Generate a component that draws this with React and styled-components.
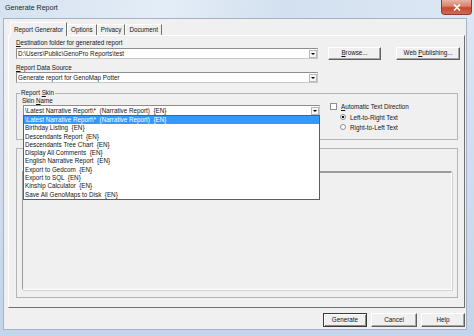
import React from "react";
import styled, { createGlobalStyle } from "styled-components";

const FONT = `"Liberation Sans", Arial, sans-serif`;

const GlobalStyle = createGlobalStyle`
  html, body { margin: 0; padding: 0; width: 474px; height: 336px; overflow: hidden; background: #fff; }
  body { font-family: ${FONT}; }
  * { box-sizing: border-box; }
`;

const Window = styled.div`
  width: 474px;
  height: 336px;
  display: flex;
  flex-direction: column;
  background: linear-gradient(180deg, #dfe8f4 0%, #d2dfef 40%, #c3d5ea 100%);
  font-family: ${FONT};
  color: #141414;
`;

const TitleBar = styled.div`
  height: 18px;
  flex: none;
  display: flex;
  align-items: flex-start;
  justify-content: space-between;
  padding-left: 5px;
  background: linear-gradient(100deg, #d6e2f0 0%, #e4edf7 35%, #d3e0ef 60%, #dde8f5 100%);
`;

const Title = styled.div`
  font-size: 7.1px;
  line-height: 17px;
  color: #1a1f28;
`;

const CloseButton = styled.div`
  width: 31px;
  height: 15px;
  margin-right: 2px;
  border: 1px solid #8a3a30;
  border-top: none;
  border-radius: 0 0 4px 4px;
  background: linear-gradient(180deg, #e9b2a5 0%, #d9806c 45%, #c44a31 55%, #d3694f 100%);
  display: flex;
  align-items: center;
  justify-content: center;
`;

const Client = styled.div`
  flex: 1;
  margin: 0 7px 6px 3px;
  background: #f0f0f0;
  border: 1px solid #a3b2c6;
  display: flex;
  flex-direction: column;
  padding: 3px 1px 2px 4px;
`;

const TabStrip = styled.div`
  height: 13px;
  flex: none;
  display: flex;
  align-items: flex-end;
  padding-left: 2px;
  position: relative;
  z-index: 2;
`;

const Tab = styled.div`
  font-size: 6.3px;
  height: ${(p) => (p.$active ? 14 : 11)}px;
  line-height: ${(p) => (p.$active ? 13 : 10)}px;
  margin-bottom: ${(p) => (p.$active ? -1 : 0)}px;
  padding: 0 ${(p) => (p.$active ? 3 : 3)}px;
  background: #f0f0f0;
  border-top: 1px solid #fff;
  border-left: 1px solid #fff;
  border-right: 1px solid #6f6f6f;
  white-space: nowrap;
`;

const Panel = styled.div`
  flex: 1;
  display: flex;
  flex-direction: column;
  border: 1px solid;
  border-color: #fff #6f6f6f #6f6f6f #fff;
  padding: 3px 4px 9px 7px;
`;

const Label = styled.div`
  font-size: 6.3px;
  line-height: 8px;
  height: 8px;
  margin-top: ${(p) => p.$mt || 0}px;
  white-space: nowrap;
`;

const Row = styled.div`
  display: flex;
  align-items: center;
  height: 13px;
`;

const Combo = styled.div`
  position: relative;
  width: ${(p) => p.$w}px;
  height: 11px;
  margin-left: ${(p) => p.$ml || 0}px;
  background: #fff;
  border: 1px solid #8d8d8d;
  border-right-color: #c8c8c8;
  border-bottom-color: #c8c8c8;
  display: flex;
  align-items: center;
  padding-left: 1px;
  font-size: 6.3px;
  white-space: pre;
`;

const ComboText = styled.span`
  flex: 1;
  line-height: 9px;
  overflow: hidden;
`;

const Arrow = styled.span`
  width: 8px;
  height: 8px;
  margin-right: 0px;
  border: 1px solid #b8b8b8;
  background: #f6f6f6;
  display: flex;
  align-items: center;
  justify-content: center;
  &::after {
    content: "";
    border-left: 2px solid transparent;
    border-right: 2px solid transparent;
    border-top: 2px solid #000;
  }
`;

const Button = styled.button`
  font-family: ${FONT};
  font-size: 6.3px;
  color: #141414;
  width: ${(p) => p.$w}px;
  height: ${(p) => p.$h || 13}px;
  margin-left: ${(p) => p.$ml || 0}px;
  padding: 0;
  background: #f0f0f0;
  border: 1px solid;
  border-color: ${(p) => (p.$default ? "#3a3a3a" : "#fff #5f5f5f #5f5f5f #fff")};
  box-shadow: ${(p) =>
    p.$default ? "inset 1px 1px #fff, inset -1px -1px #8a8a8a" : "inset -1px -1px #a8a8a8"};
  line-height: 1;
  white-space: nowrap;
`;

const Group = styled.fieldset`
  margin: ${(p) => p.$mt}px 2px 0 0;
  padding: ${(p) => p.$pad};
  border: 1px solid #b4b4b4;
  min-width: 0;
  display: flex;
  flex-direction: ${(p) => (p.$row ? "row" : "column")};
  align-items: flex-start;
  flex: ${(p) => (p.$grow ? 1 : "none")};
`;

const Legend = styled.legend`
  font-size: 6.3px;
  line-height: 8px;
  padding: 0 1px;
  margin-left: -2px;
`;

const LeftCol = styled.div`
  width: 298px;
  display: flex;
  flex-direction: column;
`;

const RightCol = styled.div`
  margin-left: 10px;
  padding-top: 5px;
  display: flex;
  flex-direction: column;
`;

const CheckRow = styled.div`
  display: flex;
  align-items: center;
  gap: 4px;
  height: ${(p) => p.$h || 10}px;
  margin-left: ${(p) => p.$ml || 0}px;
  margin-top: ${(p) => p.$mt || 0}px;
  font-size: 6.3px;
  white-space: nowrap;
`;

const CheckBox = styled.span`
  width: 7px;
  height: 7px;
  background: #fff;
  border: 1px solid #8e8e8e;
`;

const Radio = styled.span`
  width: 6px;
  height: 6px;
  border-radius: 50%;
  border: 1px solid #8e8e8e;
  background: ${(p) =>
    p.$checked ? "radial-gradient(circle, #111 0 1.2px, #fff 1.6px)" : "#fff"};
`;

const DropList = styled.div`
  position: absolute;
  top: 100%;
  left: -1px;
  right: -1px;
  background: #fff;
  border: 1px solid #5e5e5e;
  z-index: 5;
`;

const DropItem = styled.div`
  height: 8.3px;
  line-height: 8.3px;
  padding-left: 1px;
  font-size: 6.3px;
  white-space: pre;
  background: ${(p) => (p.$selected ? "#3399ff" : "transparent")};
  color: ${(p) => (p.$selected ? "#fff" : "#141414")};
`;

const Sunken = styled.div`
  flex: 1;
  align-self: stretch;
  border-top: 2px solid #9c9c9c;
  border-left: 1px solid #9c9c9c;
  border-right: 1px solid #fff;
  border-bottom: 1px solid #fff;
  box-shadow: 1px 1px 0 #d0d0d0;
`;

const ButtonRow = styled.div`
  margin-top: 5px;
  height: 14px;
  flex: none;
  display: flex;
  justify-content: flex-end;
  gap: 4px;
`;

const skins = [
  "\\Latest Narrative Report\\*  (Narrative Report)  {EN}",
  "Birthday Listing  {EN}",
  "Descendants Report  {EN}",
  "Descendants Tree Chart  {EN}",
  "Display All Comments  {EN}",
  "English Narrative Report  {EN}",
  "Export to Gedcom  {EN}",
  "Export to SQL  {EN}",
  "Kinship Calculator  {EN}",
  "Save All GenoMaps to Disk  {EN}",
];

export default function App() {
  return (
    <>
      <GlobalStyle />
      <Window>
        <TitleBar>
          <Title>Generate Report</Title>
          <CloseButton>
            <svg width="8" height="7" viewBox="0 0 8 7">
              <path d="M1 0.5 L7 6.5 M7 0.5 L1 6.5" stroke="#fff" strokeWidth="1.6" />
            </svg>
          </CloseButton>
        </TitleBar>
        <Client>
          <TabStrip>
            <Tab $active>Report Generator</Tab>
            <Tab>Options</Tab>
            <Tab>Privacy</Tab>
            <Tab>Document</Tab>
          </TabStrip>
          <Panel>
            <Label>
              <u>D</u>estination folder for generated report
            </Label>
            <Row>
              <Combo $w={302}>
                <ComboText>D:\Users\Public\GenoPro Reports\test</ComboText>
                <Arrow />
              </Combo>
              <Button $w={53} $ml={10}>
                <u>B</u>rowse...
              </Button>
              <Button $w={64} $ml={15}>
                Web <u>P</u>ublishing...
              </Button>
            </Row>
            <Label $mt={4}>
              <u>R</u>eport Data Source
            </Label>
            <Combo $w={302}>
              <ComboText>Generate report for GenoMap Potter</ComboText>
              <Arrow />
            </Combo>
            <Group $mt={6} $pad="0 0 7px 5px" $row>
              <Legend>
                Report <u>S</u>kin
              </Legend>
              <LeftCol>
                <Label>
                  Skin <u>N</u>ame
                </Label>
                <Combo $w={297} $ml={1}>
                  <ComboText>{skins[0]}</ComboText>
                  <Arrow />
                  <DropList>
                    {skins.map((s, i) => (
                      <DropItem key={s} $selected={i === 0}>
                        {s}
                      </DropItem>
                    ))}
                  </DropList>
                </Combo>
              </LeftCol>
              <RightCol>
                <CheckRow $h={8}>
                  <CheckBox />
                  <span>
                    <u>A</u>utomatic Text Direction
                  </span>
                </CheckRow>
                <CheckRow $ml={10} $mt={2}>
                  <Radio $checked />
                  <span>Left-to-Right Text</span>
                </CheckRow>
                <CheckRow $ml={10}>
                  <Radio />
                  <span>Right-to-Left Text</span>
                </CheckRow>
              </RightCol>
            </Group>
            <Group $mt={8} $pad="22px 5px 7px 5px" $grow>
              <Sunken />
            </Group>
          </Panel>
          <ButtonRow>
            <Button $w={44} $h={14} $default>
              Generate
            </Button>
            <Button $w={46} $h={14}>
              Cancel
            </Button>
            <Button $w={44} $h={14}>
              Help
            </Button>
          </ButtonRow>
        </Client>
      </Window>
    </>
  );
}
